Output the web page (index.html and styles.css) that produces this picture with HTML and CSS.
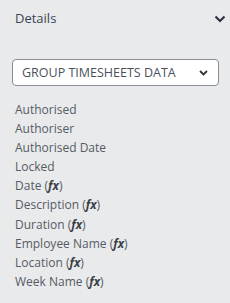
FILE: index.html
```html
<!DOCTYPE html>
<html>
<head>
<meta charset="utf-8">
<link rel="stylesheet" href="styles.css">
</head>
<body>
<div class="panel">
  <div class="header">
    <span class="title">Details</span>
    <svg class="hchev" width="12" height="8" viewBox="0 0 12 8"><path d="M1.5 1.5 L6 6 L10.5 1.5" fill="none" stroke="#2b3440" stroke-width="2.2"/></svg>
  </div>
  <div class="select">
    <span class="stext">GROUP TIMESHEETS DATA</span>
    <svg class="schev" width="9" height="6" viewBox="0 0 9 6"><path d="M1 1 L4.5 4.5 L8 1" fill="none" stroke="#333" stroke-width="1.8"/></svg>
  </div>
  <ul class="fields">
    <li>Authorised</li>
    <li>Authoriser</li>
    <li>Authorised Date</li>
    <li>Locked</li>
    <li>Date (<b class="fx">fx</b>)</li>
    <li>Description (<b class="fx">fx</b>)</li>
    <li>Duration (<b class="fx">fx</b>)</li>
    <li>Employee Name (<b class="fx">fx</b>)</li>
    <li>Location (<b class="fx">fx</b>)</li>
    <li>Week Name (<b class="fx">fx</b>)</li>
  </ul>
</div>
</body>
</html>
```
FILE: styles.css
```css
html, body { margin: 0; padding: 0; }
body {
  background: #e9eaec;
  font-family: "Open Sans", "Liberation Sans", sans-serif;
  width: 230px;
  height: 303px;
  overflow: hidden;
}
.header {
  display: flex;
  align-items: center;
  justify-content: space-between;
  padding: 8px 4px 0 15px;
  height: 20px;
}
.title {
  font-size: 13px;
  color: #3a4452;
}
.hchev { display: block; margin-top: 2px; }
.select {
  margin: 31px 11px 0 12px;
  height: 25px;
  background: #fff;
  border: 1px solid #8a8d93;
  border-radius: 4px;
  display: flex;
  align-items: center;
  justify-content: space-between;
  padding: 0 10px 0 9px;
}
.stext {
  font-size: 12.5px;
  font-stretch: 90%;
  color: #4a515b;
}
.schev { display: block; }
.fields {
  list-style: none;
  margin: 14px 0 0 15px;
  padding: 0;
}
.fields li {
  font-size: 12px;
  line-height: 19.1px;
  color: #555b64;
}
.fx {
  font-style: italic;
  font-weight: 700;
  color: #3a3f47;
}
```
